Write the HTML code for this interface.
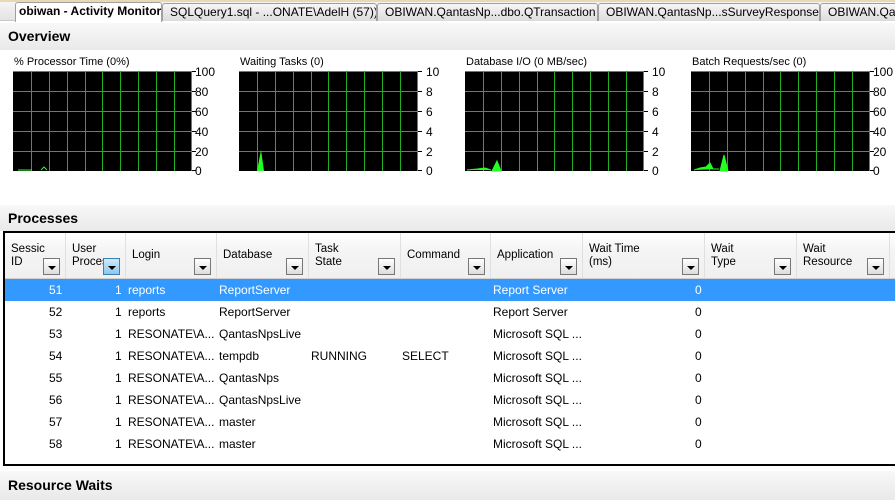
<!DOCTYPE html>
<html><head><meta charset="utf-8"><style>
*{margin:0;padding:0;box-sizing:border-box}
body{width:895px;height:500px;overflow:hidden;background:#fff;font-family:"Liberation Sans",sans-serif;font-size:12px;color:#000;position:relative}
.abs{position:absolute}
.tabbar{left:0;top:0;width:895px;height:21px;background:linear-gradient(#f4f4f4,#e4e4e4);border-top:2px solid #e8d9b0;border-bottom:1px solid #c8c8c8}
.tab{position:absolute;top:3px;height:18px;border:1px solid #a0a0a0;border-bottom:none;background:linear-gradient(#f6f6f6,#dcdcdc);font-size:12px;line-height:16px;padding-left:7px;white-space:nowrap;overflow:hidden;border-radius:3px 3px 0 0}
.tab.act{background:#fff;font-weight:bold;top:2px;height:20px;font-size:12px}
.band{left:0;width:895px;height:27px;background:linear-gradient(#f8f8f8,#e9e9e9);font-weight:bold;font-size:14px;padding:5px 0 0 8px}
.ctitle{font-size:11px;top:56px}
.lbl{font-size:12px;line-height:12px}
.grid{left:3px;top:231px;width:900px;height:235px;border:2px solid #000;border-right:none;background:#fff}
.hdr{position:absolute;top:0;height:45px;border-right:1px solid #e0e0e0;background:linear-gradient(#fff,#f4f4f4 40%,#f0f0f0);font-size:11.5px;line-height:13px;padding:10px 0 0 6px}
.dd{position:absolute;bottom:3px;right:5px;width:17px;height:17px;border:1px solid #777;background:linear-gradient(#fff,#ddd)}
.dd:after{content:"";position:absolute;left:4px;top:7px;border-left:4px solid transparent;border-right:4px solid transparent;border-top:4px solid #000}
.dd.on{border-color:#3c7fb1;background:linear-gradient(#cfe9fa,#8cc7ec)}
.row{position:absolute;left:0;width:900px;height:22px;font-size:12px;line-height:22px}
.row span{position:absolute}
.sel{background:#3399ff;color:#fff}
</style></head><body>
<div class="abs tabbar"></div>
<div class="tab act" style="left:15px;width:147px;padding-left:3px">obiwan - Activity Monitor</div>
<div class="tab" style="left:162px;width:215px">SQLQuery1.sql - ...ONATE\AdelH (57))</div>
<div class="tab" style="left:377px;width:221px">OBIWAN.QantasNp...dbo.QTransaction</div>
<div class="tab" style="left:598px;width:222px">OBIWAN.QantasNp...sSurveyResponse</div>
<div class="tab" style="left:820px;width:80px">OBIWAN.Qa</div>

<div class="abs band" style="top:23px">Overview</div>

<div class="abs ctitle" style="left:14px">% Processor Time (0%)</div>
<div class="abs ctitle" style="left:240px">Waiting Tasks (0)</div>
<div class="abs ctitle" style="left:466px">Database I/O (0 MB/sec)</div>
<div class="abs ctitle" style="left:692px">Batch Requests/sec (0)</div>

<svg class="abs" style="left:0;top:60px" width="895" height="120">
<defs>
<g id="ch">
<rect x="0" y="11" width="179" height="100" fill="#000"/>
<g fill="#22b022">
<rect x="18" y="11" width="1" height="100"/><rect x="36" y="11" width="1" height="100"/><rect x="54" y="11" width="1" height="100"/><rect x="72" y="11" width="1" height="100"/><rect x="89" y="11" width="1" height="100"/><rect x="107" y="11" width="1" height="100"/><rect x="125" y="11" width="1" height="100"/><rect x="143" y="11" width="1" height="100"/><rect x="161" y="11" width="1" height="100"/><rect x="178" y="11" width="1" height="100"/>
<rect x="0" y="11" width="179" height="1"/><rect x="0" y="31" width="179" height="1"/><rect x="0" y="51" width="179" height="1"/><rect x="0" y="71" width="179" height="1"/><rect x="0" y="91" width="179" height="1"/>
</g>
<g fill="#000"><rect x="179" y="11" width="4" height="1"/><rect x="179" y="31" width="4" height="1"/><rect x="179" y="51" width="4" height="1"/><rect x="179" y="71" width="4" height="1"/><rect x="179" y="91" width="4" height="1"/><rect x="179" y="110" width="4" height="1"/></g>
</g>
</defs>
<g transform="translate(13,0)"><use href="#ch"/><path d="M5 110h14M28 110l3-3 3 3" stroke="#2f2" fill="none"/></g>
<g transform="translate(239,0)"><use href="#ch"/><path d="M18 111l4-21 3 21z" fill="#2f2"/></g>
<g transform="translate(465,0)"><use href="#ch"/><path d="M2 110l10-1 8-1 6 2M27 111l5-10 4 10z" stroke="#2f2" fill="#2f2"/></g>
<g transform="translate(691,0)"><use href="#ch"/><path d="M3 110l6-2 6-1 4-4 3 6h6M29 111l4-16 4 16z" stroke="#2f2" fill="#2f2"/></g>
</svg>
<div class="abs lbl" style="left:195px;top:66px">100</div><div class="abs lbl" style="left:195px;top:86px">80</div><div class="abs lbl" style="left:195px;top:106px">60</div><div class="abs lbl" style="left:195px;top:126px">40</div><div class="abs lbl" style="left:195px;top:146px">20</div><div class="abs lbl" style="left:195px;top:165px">0</div>
<div class="abs lbl" style="left:426px;top:66px">10</div><div class="abs lbl" style="left:426px;top:86px">8</div><div class="abs lbl" style="left:426px;top:106px">6</div><div class="abs lbl" style="left:426px;top:126px">4</div><div class="abs lbl" style="left:426px;top:146px">2</div><div class="abs lbl" style="left:426px;top:165px">0</div>
<div class="abs lbl" style="left:652px;top:66px">10</div><div class="abs lbl" style="left:652px;top:86px">8</div><div class="abs lbl" style="left:652px;top:106px">6</div><div class="abs lbl" style="left:652px;top:126px">4</div><div class="abs lbl" style="left:652px;top:146px">2</div><div class="abs lbl" style="left:652px;top:165px">0</div>
<div class="abs lbl" style="left:873px;top:66px">100</div><div class="abs lbl" style="left:873px;top:86px">80</div><div class="abs lbl" style="left:873px;top:106px">60</div><div class="abs lbl" style="left:873px;top:126px">40</div><div class="abs lbl" style="left:873px;top:146px">20</div><div class="abs lbl" style="left:873px;top:165px">0</div>

<div class="abs band" style="top:205px;height:26px">Processes</div>

<div class="abs grid">
<div class="hdr" style="left:0;width:61px">Sessic<br>ID<div class="dd"></div></div>
<div class="hdr" style="left:61px;width:60px">User<br>Proces<div class="dd on"></div></div>
<div class="hdr" style="left:121px;width:91px;padding-top:16px">Login<div class="dd"></div></div>
<div class="hdr" style="left:212px;width:92px;padding-top:16px">Database<div class="dd"></div></div>
<div class="hdr" style="left:304px;width:92px">Task<br>State<div class="dd"></div></div>
<div class="hdr" style="left:396px;width:90px;padding-top:16px">Command<div class="dd"></div></div>
<div class="hdr" style="left:486px;width:92px;padding-top:16px">Application<div class="dd"></div></div>
<div class="hdr" style="left:578px;width:122px">Wait Time<br>(ms)<div class="dd"></div></div>
<div class="hdr" style="left:700px;width:92px">Wait<br>Type<div class="dd"></div></div>
<div class="hdr" style="left:792px;width:93px">Wait<br>Resource<div class="dd"></div></div>
<div class="hdr" style="left:885px;width:20px">B<br>B</div>
<div class="abs" style="left:0;top:45px;width:900px;height:1px;background:#d0d0d0"></div>

<div class="row sel" style="top:46px"><span style="left:44px">51</span><span style="left:110px">1</span><span style="left:123px">reports</span><span style="left:214px">ReportServer</span><span style="left:488px">Report Server</span><span style="left:690px">0</span></div>
<div class="row" style="top:68px"><span style="left:44px">52</span><span style="left:110px">1</span><span style="left:123px">reports</span><span style="left:214px">ReportServer</span><span style="left:488px">Report Server</span><span style="left:690px">0</span></div>
<div class="row" style="top:90px"><span style="left:44px">53</span><span style="left:110px">1</span><span style="left:123px">RESONATE\A...</span><span style="left:214px">QantasNpsLive</span><span style="left:488px">Microsoft SQL ...</span><span style="left:690px">0</span></div>
<div class="row" style="top:112px"><span style="left:44px">54</span><span style="left:110px">1</span><span style="left:123px">RESONATE\A...</span><span style="left:214px">tempdb</span><span style="left:306px">RUNNING</span><span style="left:397px">SELECT</span><span style="left:488px">Microsoft SQL ...</span><span style="left:690px">0</span></div>
<div class="row" style="top:134px"><span style="left:44px">55</span><span style="left:110px">1</span><span style="left:123px">RESONATE\A...</span><span style="left:214px">QantasNps</span><span style="left:488px">Microsoft SQL ...</span><span style="left:690px">0</span></div>
<div class="row" style="top:156px"><span style="left:44px">56</span><span style="left:110px">1</span><span style="left:123px">RESONATE\A...</span><span style="left:214px">QantasNpsLive</span><span style="left:488px">Microsoft SQL ...</span><span style="left:690px">0</span></div>
<div class="row" style="top:178px"><span style="left:44px">57</span><span style="left:110px">1</span><span style="left:123px">RESONATE\A...</span><span style="left:214px">master</span><span style="left:488px">Microsoft SQL ...</span><span style="left:690px">0</span></div>
<div class="row" style="top:200px"><span style="left:44px">58</span><span style="left:110px">1</span><span style="left:123px">RESONATE\A...</span><span style="left:214px">master</span><span style="left:488px">Microsoft SQL ...</span><span style="left:690px">0</span></div>
</div>

<div class="abs band" style="top:471px;height:29px;padding-top:6px">Resource Waits</div>
</body></html>
